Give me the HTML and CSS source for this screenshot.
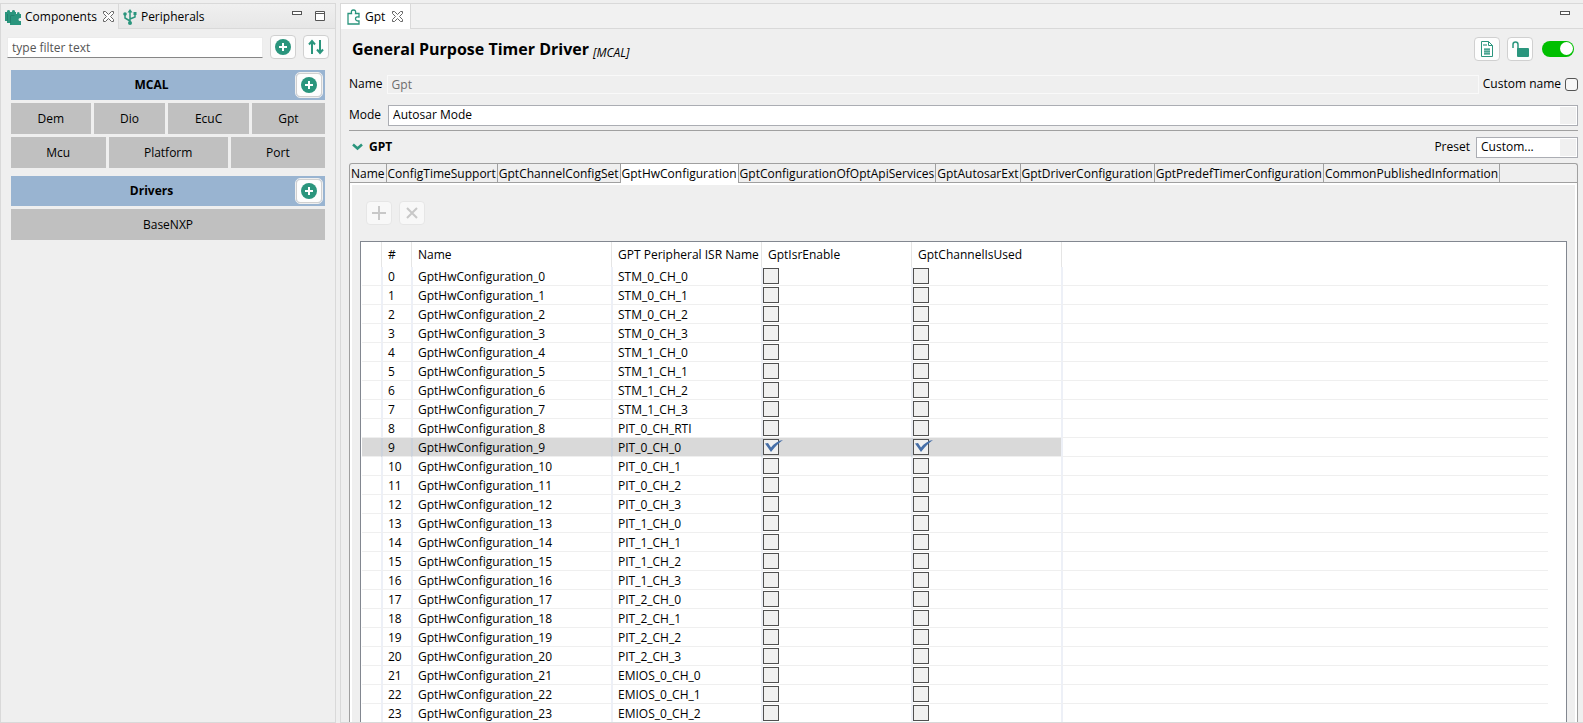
FILE: index.html
```html
<!DOCTYPE html>
<html lang="en">

<head>
  <meta charset="UTF-8" />
  <meta name="viewport" content="width=device-width, initial-scale=1.0" />
  <title>Gpt - General Purpose Timer Driver</title>
  <link rel="stylesheet" href="styles.css">
</head>

<body>
  <svg class="defs" aria-hidden="true">
    <symbol id="icon-add" viewBox="0 0 16 16">
      <circle cx="8" cy="8" r="8" fill="#2a957d" />
      <path d="M8 4v8M4 8h8" stroke="#fff" stroke-width="2" />
    </symbol>
    <symbol id="icon-close" viewBox="0 0 11 11">
      <path d="M.5 .5h2l3 3 3-3h2v2l-3 3 3 3v2h-2l-3-3-3 3h-2v-2l3-3-3-3z" fill="#fff" stroke="#666" />
    </symbol>
    <symbol id="icon-min" viewBox="0 0 10 10">
      <rect x=".5" y=".5" width="9" height="3" fill="#fff" stroke="#555" />
    </symbol>
    <symbol id="icon-max" viewBox="0 0 10 10">
      <path d="M.5 .5h9v9h-9zM.5 2.5h9" fill="#fff" stroke="#555" />
    </symbol>
  </svg>

  <aside class="panel sidebar">
    <div class="tabbar">
      <div class="view-tab active">
        <svg width="16" height="16" viewBox="0 0 16 16">
          <path d="M0 3h2q-.5-2 1.500-2T5 3h2q-.5-2 1.500-2T10 3h1v2h1q-.3-2 1.300-2t1.400 2H16v4q-2.500-.5-2.500 1.500T16 12v4H5v-2H2v-2H0z" fill="#2a957d" />
          <path d="M2.500 5v7M5.500 7v7M5.500 6.500h4" fill="none" stroke="#1f7866" stroke-width=".7" />
        </svg>
        <span>Components</span>
        <button class="plain close" aria-label="Close Components"><svg width="11" height="11"><use href="#icon-close" /></svg></button>
      </div>
      <div class="view-tab">
        <svg width="14" height="16" viewBox="0 0 14 16" fill="none" stroke="#2a957d" stroke-width="1.500">
          <path d="M7 2v12M7 12L2 9V5M7 10l5-2V5" />
          <path d="M4.500 3.500L7 0l2.500 3.500z" fill="#2a957d" stroke="none" />
          <circle cx="7" cy="14" r="2" fill="#2a957d" stroke="none" />
          <circle cx="2" cy="5" r="1.800" fill="#2a957d" stroke="none" />
          <path d="M10.500 3h3v3h-3z" fill="#2a957d" stroke="none" />
        </svg>
        <span>Peripherals</span>
      </div>
      <div class="window-btns">
        <button class="plain" aria-label="Minimize"><svg width="10" height="10"><use href="#icon-min" /></svg></button>
        <button class="plain" aria-label="Maximize"><svg width="10" height="10"><use href="#icon-max" /></svg></button>
      </div>
    </div>

    <div class="filter">
      <input type="text" placeholder="type filter text" aria-label="Filter components" />
      <button class="icon-btn" aria-label="Add component"><svg width="16" height="16"><use href="#icon-add" /></svg></button>
      <button class="icon-btn" aria-label="Sort">
        <svg width="16" height="16" viewBox="0 0 16 16" fill="none" stroke="#2a957d" stroke-width="2">
          <path d="M4 15V2M1 5.500L4 2l3 3.500M12 1v13M9 10.500l3 3.500 3-3.500" />
        </svg>
      </button>
    </div>

    <section class="group">
      <div class="group-head">
        <h2>MCAL</h2>
        <button class="icon-btn" aria-label="Add MCAL component"><svg width="16" height="16"><use href="#icon-add" /></svg></button>
      </div>
      <div class="tiles">
        <button>Dem</button>
        <button>Dio</button>
        <button>EcuC</button>
        <button>Gpt</button>
      </div>
      <div class="tiles">
        <button>Mcu</button>
        <button>Platform</button>
        <button>Port</button>
      </div>
    </section>

    <section class="group">
      <div class="group-head">
        <h2>Drivers</h2>
        <button class="icon-btn" aria-label="Add driver"><svg width="16" height="16"><use href="#icon-add" /></svg></button>
      </div>
      <div class="tiles">
        <button>BaseNXP</button>
      </div>
    </section>
  </aside>

  <main class="panel editor">
    <div class="tabbar">
      <div class="view-tab editor-tab active">
        <svg width="13" height="16" viewBox="0 0 13 16" fill="none" stroke="#2a957d" stroke-width="1.300">
          <path d="M1 4.500h3.500q-.8-3.500 2-3.500t2 3.500H12V8q-3.500-.6-3.500 1.800T12 12v3H1z" />
        </svg>
        <span>Gpt</span>
        <button class="plain close" aria-label="Close Gpt"><svg width="11" height="11"><use href="#icon-close" /></svg></button>
      </div>
      <div class="window-btns">
        <button class="plain" aria-label="Minimize"><svg width="10" height="10"><use href="#icon-min" /></svg></button>
      </div>
    </div>

    <div class="content">
      <header class="title">
        <h1>General Purpose Timer Driver</h1>
        <em>[MCAL]</em>
        <div class="title-btns">
          <button class="icon-btn" aria-label="Documentation">
            <svg width="12" height="16" viewBox="0 0 12 16">
              <path d="M.5 .5h7l4 4v11H.5z" fill="#fff" stroke="#2a957d" />
              <path d="M7.500 .5v4h4" fill="none" stroke="#2a957d" />
              <path d="M3 7h6v7H3zM2 3h4v2H2z" fill="#85c2b5" />
              <path d="M3 8.500h6M3 10.500h6M3 12.500h6" stroke="#4ca592" />
            </svg>
          </button>
          <button class="icon-btn" aria-label="Unlock">
            <svg width="17" height="16" viewBox="0 0 17 16">
              <path d="M1 7V3.500Q1 1 3.500 1T6 3.500V8" fill="none" stroke="#2a957d" stroke-width="1.500" />
              <rect x="5" y="7" width="12" height="9" rx="1" fill="#2a957d" />
            </svg>
          </button>
          <input type="checkbox" class="toggle" aria-label="Enable component" checked />
        </div>
      </header>

      <div class="field">
        <label for="name">Name</label>
        <input type="text" id="name" value="Gpt" disabled />
        <label for="custom">Custom name</label>
        <input type="checkbox" id="custom" class="custom" />
      </div>
      <div class="field mode">
        <label for="mode">Mode</label>
        <select id="mode"><option>Autosar Mode</option></select>
      </div>

      <div class="section-head">
        <svg width="11" height="8" viewBox="0 0 11 8"><path d="M1 1.500l4.500 4 4.500-4" fill="none" stroke="#2a957d" stroke-width="2.500" /></svg>
        <h2>GPT</h2>
        <label for="preset">Preset</label>
        <select id="preset"><option>Custom...</option></select>
      </div>

      <div class="folder">
        <div class="folder-tabs" role="tablist">
          <button role="tab">Name</button>
          <button role="tab">ConfigTimeSupport</button>
          <button role="tab">GptChannelConfigSet</button>
          <button role="tab" class="active" aria-selected="true">GptHwConfiguration</button>
          <button role="tab">GptConfigurationOfOptApiServices</button>
          <button role="tab">GptAutosarExt</button>
          <button role="tab">GptDriverConfiguration</button>
          <button role="tab">GptPredefTimerConfiguration</button>
          <button role="tab">CommonPublishedInformation</button>
        </div>
        <div class="folder-body">
          <div class="toolbar">
            <button class="icon-btn" aria-label="Add row" disabled>
              <svg width="14" height="14" viewBox="0 0 14 14"><path d="M7 0v14M0 7h14" stroke="#c8c8c8" stroke-width="2" /></svg>
            </button>
            <button class="icon-btn" aria-label="Remove row" disabled>
              <svg width="12" height="12" viewBox="0 0 12 12"><path d="M1 1l10 10M11 1L1 11" stroke="#c8c8c8" stroke-width="2" /></svg>
            </button>
          </div>
          <div class="table-box">
            <table id="hwTable">
              <colgroup>
                <col class="c-mark"><col class="c-num"><col class="c-name"><col class="c-wide"><col class="c-wide"><col class="c-wide"><col>
              </colgroup>
              <thead>
                <tr>
                  <th></th>
                  <th>#</th>
                  <th>Name</th>
                  <th>GPT Peripheral ISR Name</th>
                  <th>GptIsrEnable</th>
                  <th>GptChannelIsUsed</th>
                  <th></th>
                </tr>
              </thead>
              <tbody></tbody>
            </table>
          </div>
        </div>
      </div>
    </div>
  </main>

  <script>
    const channels = [
      "STM_0_CH_0", "STM_0_CH_1", "STM_0_CH_2", "STM_0_CH_3",
      "STM_1_CH_0", "STM_1_CH_1", "STM_1_CH_2", "STM_1_CH_3",
      "PIT_0_CH_RTI", "PIT_0_CH_0", "PIT_0_CH_1", "PIT_0_CH_2", "PIT_0_CH_3",
      "PIT_1_CH_0", "PIT_1_CH_1", "PIT_1_CH_2", "PIT_1_CH_3",
      "PIT_2_CH_0", "PIT_2_CH_1", "PIT_2_CH_2", "PIT_2_CH_3",
      "EMIOS_0_CH_0", "EMIOS_0_CH_1", "EMIOS_0_CH_2"
    ];
    const selected = 9;
    const tableBody = document.querySelector("#hwTable tbody");

    channels.forEach((channel, index) => {
      const row = document.createElement("tr");
      const checked = index === selected ? "checked" : "";
      if (index === selected) row.className = "selected";
      row.innerHTML = `
        <td></td>
        <td>${index}</td>
        <td>GptHwConfiguration_${index}</td>
        <td>${channel}</td>
        <td class="check"><input type="checkbox" aria-label="GptIsrEnable ${index}" ${checked} /></td>
        <td class="check"><input type="checkbox" aria-label="GptChannelIsUsed ${index}" ${checked} /></td>
        <td></td>
      `;
      tableBody.appendChild(row);
    });
  </script>
</body>

</html>
```

FILE: styles.css
```css
* {
  box-sizing: border-box;
}

body {
  display: flex;
  gap: 4px;
  height: 100vh;
  margin: 0;
  padding-top: 3px;
  overflow: hidden;
  background-color: #efefef;
  color: #000;
  font-family: "Open Sans", "Segoe UI", sans-serif;
  font-size: 12px;
  line-height: 16px;
}

button,
input,
select {
  margin: 0;
  font: inherit;
  color: inherit;
}

h1,
h2 {
  margin: 0;
  font-size: 12px;
}

svg {
  display: block;
  flex: none;
}

.defs {
  position: absolute;
  width: 0;
  height: 0;
}

.panel {
  display: flex;
  flex-direction: column;
  border: 1px solid #d9d9d9;
}

.sidebar {
  flex: none;
  width: 336px;
}

.editor {
  flex: 1;
  min-width: 0;
  border-right: none;
}

/* view tabs */
.tabbar {
  display: flex;
  flex: none;
  height: 25px;
  background: linear-gradient(#f0f0f0, #e6e6e6);
  box-shadow: inset 0 -1px #d9d9d9;
}

.editor .tabbar {
  background: #f1f1f1;
}

.view-tab {
  display: flex;
  align-items: center;
  gap: 4px;
  padding: 0 4px;
}

.view-tab.active {
  background-color: #f0f0f0;
  border-right: 1px solid #d9d9d9;
}

.editor-tab.active {
  gap: 5px;
  padding: 0 7px 0 6px;
  background-color: #fff;
}

.plain {
  padding: 0;
  border: none;
  background: none;
}

.close {
  margin-left: 2px;
}

.window-btns {
  display: flex;
  align-items: flex-start;
  gap: 13px;
  margin-left: auto;
  padding: 7px 10px;
}

.editor .window-btns {
  padding-right: 13px;
}

.icon-btn {
  display: flex;
  flex: none;
  align-items: center;
  justify-content: center;
  width: 26px;
  height: 24px;
  padding: 0;
  border: 1px solid #d0d0d0;
  border-radius: 4px;
  background-color: #fdfdfd;
}

.icon-btn:disabled {
  border-color: #e6e6e6;
  background-color: #f8f8f8;
}

/* components list */
.filter {
  display: flex;
  align-items: center;
  gap: 7px;
  padding: 6px 6px 11px;
}

.filter input {
  flex: 1;
  min-width: 0;
  height: 21px;
  padding: 0 4px;
  border: 1px solid #ececec;
  border-bottom-color: #868686;
  background-color: #fff;
}

.filter input::placeholder {
  color: #555;
}

.group {
  display: flex;
  flex-direction: column;
  gap: 3px;
  margin: 0 10px 8px;
}

.group-head {
  display: flex;
  align-items: center;
  gap: 4px;
  height: 30px;
  padding-right: 3px;
  background-color: #99b4d1;
}

.group-head h2 {
  flex: 1;
  text-align: center;
}

.group-head .icon-btn {
  outline: 1px solid #efefef;
}

.tiles {
  display: flex;
  gap: 3px;
}

.tiles button {
  flex: 1 1 auto;
  height: 31px;
  padding: 0;
  border: none;
  background-color: #c0c0c0;
}

/* editor */
.content {
  display: flex;
  flex: 1;
  flex-direction: column;
  min-height: 0;
  padding: 0 5px 0 8px;
}

.title {
  display: flex;
  align-items: center;
  height: 39px;
  gap: 4px;
  padding-left: 3px;
}

.title h1 {
  padding-top: 1px;
  font-size: 16px;
  line-height: 22px;
}

.title em {
  padding-top: 8px;
}

.title-btns {
  display: flex;
  align-items: center;
  gap: 7px;
  margin-left: auto;
  padding-right: 4px;
}

.toggle {
  display: flex;
  align-items: center;
  justify-content: flex-end;
  appearance: none;
  width: 32px;
  height: 16px;
  margin-left: 2px;
  padding: 0 1px;
  border-radius: 8px;
  background-color: #00bf00;
}

.toggle::before {
  content: "";
  width: 13px;
  height: 13px;
  border-radius: 50%;
  background-color: #fff;
}

.field {
  display: flex;
  flex: none;
  align-items: center;
  gap: 4px;
  height: 32px;
}

.field input[type="text"] {
  flex: 1;
  min-width: 0;
  height: 19px;
  padding: 0 4px;
  border: 1px solid #f9f9f9;
  background-color: #efefef;
  color: #6d6d6d;
}

.custom {
  appearance: none;
  width: 13px;
  height: 13px;
  border: 1px solid #555;
  border-radius: 3px;
  background-color: #f6f6f6;
}

.mode {
  gap: 7px;
  height: 31px;
  border-bottom: 1px solid #a0a0a0;
}

.mode select {
  flex: 1;
}

select {
  appearance: none;
  height: 21px;
  padding: 0 20px 0 4px;
  border: 1px solid #abadb3;
  border-radius: 0;
  background: linear-gradient(#f0f0f0, #f0f0f0) right 1px center / 16px 17px no-repeat #fff;
}

.section-head {
  display: flex;
  flex: none;
  align-items: center;
  gap: 6px;
  height: 32px;
  padding-left: 3px;
}

.section-head h2 {
  flex: 1;
}

.section-head select {
  width: 102px;
}

/* tab folder */
.folder {
  display: flex;
  flex: 1;
  flex-direction: column;
  min-height: 0;
  border: 1px solid #a0a0a0;
  border-bottom: none;
  border-radius: 3px 3px 0 0;
}

.folder-tabs {
  display: flex;
  flex: none;
  height: 19px;
  border-bottom: 1px solid #a0a0a0;
}

.folder-tabs button {
  padding: 2px 1px 0;
  border: none;
  border-right: 1px solid #a0a0a0;
  background: none;
  white-space: nowrap;
}

.folder-tabs .active {
  margin-bottom: -1px;
  padding-top: 1px;
  background-color: #fff;
}

.folder-body {
  display: flex;
  flex: 1;
  flex-direction: column;
  min-height: 0;
  padding: 0 8px;
  border: 2px solid #fff;
  border-bottom: none;
}

.toolbar {
  display: flex;
  gap: 7px;
  padding: 16px 6px;
}

.table-box {
  flex: 1;
  min-height: 0;
  overflow: hidden;
  padding: 0 18px 0 1px;
  border: 1px solid #828790;
  border-bottom: none;
  background-color: #fff;
}

table {
  width: 100%;
  table-layout: fixed;
  border-spacing: 0;
}

.c-mark {
  width: 19px;
}

.c-num {
  width: 30px;
}

.c-name {
  width: 200px;
}

.c-wide {
  width: 150px;
}

th {
  height: 25px;
  padding: 0 0 0 6px;
  border-left: 1px solid #e5e5e5;
  font-weight: normal;
  text-align: left;
  white-space: nowrap;
}

td {
  height: 19px;
  padding: 2px 0 0 5px;
  border-left: 2px solid #edf0f7;
  border-bottom: 1px solid #efefef;
  white-space: nowrap;
}

th:first-child,
td:first-child {
  border-left: none;
}

td.check {
  padding: 0;
}

.selected td:not(:last-child) {
  border-left-color: #cdd3dc;
  background-color: #d9d9d9;
}

.check input {
  display: block;
  position: relative;
  appearance: none;
  width: 16px;
  height: 16px;
  border: 1px solid #505050;
  background-color: #f0f0f0;
}

.check input:checked::after {
  content: "";
  position: absolute;
  top: 0;
  left: 1px;
  width: 18px;
  height: 12px;
  background: url("data:image/svg+xml,%3Csvg xmlns='http://www.w3.org/2000/svg' viewBox='0 0 18 12'%3E%3Cpath d='M0 3.500L3 3l3 4.500Q11 1 18 0 12 4 6 12z' fill='%23466fa8'/%3E%3C/svg%3E") no-repeat;
}
```
